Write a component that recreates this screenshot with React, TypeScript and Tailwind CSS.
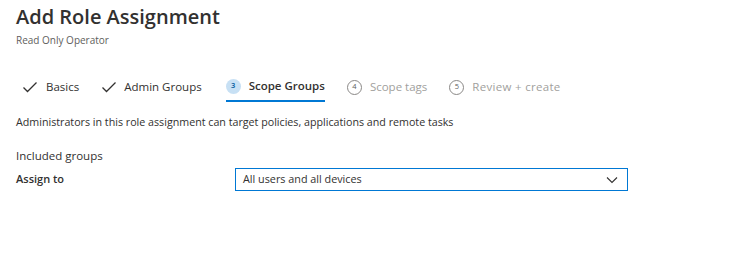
import React from "react";

const font = { fontFamily: '"Open Sans", "Noto Sans", sans-serif' };

function Check() {
  return (
    <svg width="16" height="16" viewBox="0 0 16 16" fill="none">
      <path d="M1.5 8.5 L5.5 12.5 L14.5 3.5" stroke="#323130" strokeWidth="1.3" />
    </svg>
  );
}

function Num({ n, active }: { n: number; active?: boolean }) {
  return active ? (
    <span className="flex h-[15px] w-[15px] items-center justify-center rounded-full bg-[#c7e0f4] text-[7.5px] font-semibold text-[#005a9e]">
      {n}
    </span>
  ) : (
    <span className="flex h-[15px] w-[15px] items-center justify-center rounded-full border border-[#8a8886] text-[7.5px] text-[#605e5c]">
      {n}
    </span>
  );
}

export default function App() {
  return (
    <div className="h-[276px] w-[740px] bg-white pl-4 text-[#323130]" style={font}>
      <div className="pt-[3px]">
        <div className="text-[20px] font-semibold leading-[28px]">Add Role Assignment</div>
        <div className="mt-[2px] text-[10px] leading-[14px] text-[#605e5c]">Read Only Operator</div>
      </div>
      <div className="mt-[25px] flex h-[30px] items-stretch text-[11.5px]">
        <div className="mr-[22px] flex items-center gap-[8px] pl-[6px]">
          <Check />
          <span className="text-[#323130]">Basics</span>
        </div>
        <div className="mr-[24px] flex items-center gap-[7px]">
          <Check />
          <span>Admin Groups</span>
        </div>
        <div className="mr-[22px] flex items-center gap-[8px] border-b-2 border-[#0078d4]">
          <Num n={3} active />
          <span className="font-semibold">Scope Groups</span>
        </div>
        <div className="mr-[22px] flex items-center gap-[8px] text-[#a19f9d]">
          <Num n={4} />
          <span>Scope tags</span>
        </div>
        <div className="flex items-center gap-[8px] text-[#a19f9d]">
          <Num n={5} />
          <span className="tracking-[0.3px]">Review + create</span>
        </div>
      </div>
      <div className="mt-[12px] text-[10.7px] leading-[16px]">
        Administrators in this role assignment can target policies, applications and remote tasks
      </div>
      <div className="mt-[18px] text-[11.5px] leading-[16px]">Included groups</div>
      <div className="mt-[4px] flex items-center text-[11px]">
        <div className="w-[219px] font-semibold">Assign to</div>
        <div className="flex h-[23px] w-[393px] items-center justify-between border border-[#0078d4] pl-[7px] pr-[9px]">
          <span className="text-[10.8px]">All users and all devices</span>
          <svg width="12" height="8" viewBox="0 0 12 8" fill="none">
            <path d="M1 1.5 L6 6.5 L11 1.5" stroke="#323130" strokeWidth="1.1" />
          </svg>
        </div>
      </div>
    </div>
  );
}
